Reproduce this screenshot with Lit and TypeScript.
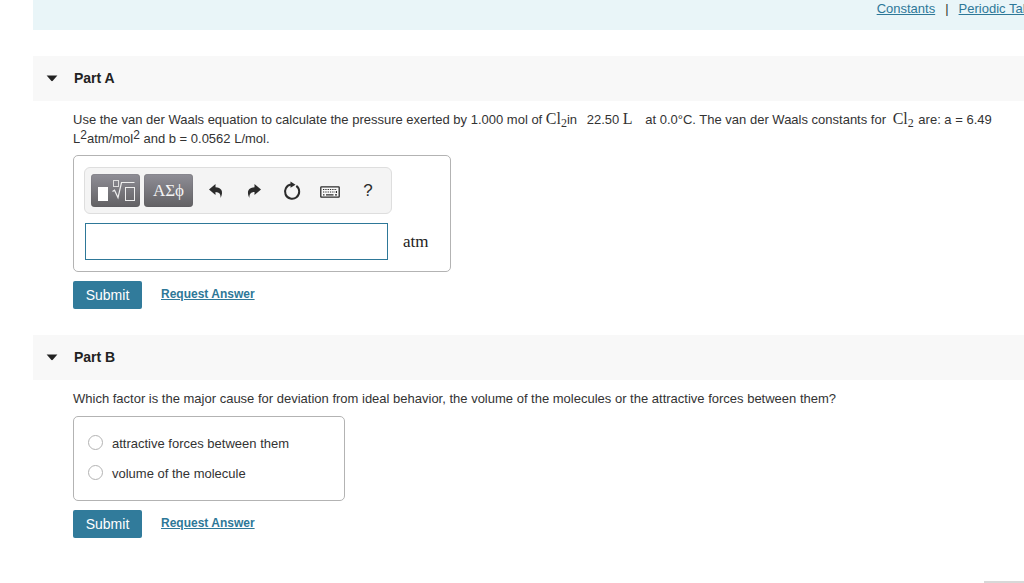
import { LitElement, html, css, svg } from "lit";
import { customElement, property } from "lit/decorators.js";

const icons = {
  undo: svg`<path d="M1 6.5 L7.5 1 V4.2 C13 4.4 16 8 12.6 15 C12.8 11 11.4 9 7.5 8.9 V12 Z" fill="#2b2b2b"/>`,
  redo: svg`<path d="M15 6.5 L8.5 1 V4.2 C3 4.4 0 8 3.4 15 C3.2 11 4.6 9 8.5 8.9 V12 Z" fill="#2b2b2b"/>`,
};

@customElement("part-header")
class PartHeader extends LitElement {
  @property() label = "";
  static styles = css`
    :host { display: block; background: #f8f8f8; }
    .title { margin: 0; font-size: 14px; line-height: 45px; font-weight: bold; }
    .toggle {
      display: flex; align-items: center; gap: 16px; height: 45px; width: 100%;
      padding: 0 0 0 13px; border: 0; background: none; font: inherit; color: #222; text-align: left;
    }
  `;
  render() {
    return html`<h2 class="title">
      <button class="toggle" aria-expanded="true">
        <svg width="12" height="7" viewBox="0 0 12 7"><path d="M.6 .6 H11.4 L6.8 5.8 Q6 6.6 5.2 5.8 Z" fill="#222"/></svg>
        ${this.label}
      </button>
    </h2>`;
  }
}

@customElement("submit-row")
class SubmitRow extends LitElement {
  static styles = css`
    :host { display: flex; align-items: center; gap: 19px; margin-top: 9px; }
    .submit {
      width: 69px; height: 28px; padding: 0; border: 0; border-radius: 2px;
      background: #317b9b; color: #fff; font: 14px/28px "Liberation Sans", sans-serif;
    }
    .request { color: #2e7898; font-size: 12px; font-weight: bold; line-height: 16px; padding-bottom: 2px; }
  `;
  render() {
    return html`<button class="submit">Submit</button><a class="request" href="#">Request Answer</a>`;
  }
}

@customElement("answer-entry")
class AnswerEntry extends LitElement {
  static styles = css`
    :host {
      display: block; box-sizing: border-box; width: fit-content; margin-top: 7px;
      padding: 11px 21px 11px 10px; border: 1px solid #b3b3b3; border-radius: 5px;
    }
    .tools {
      display: flex; align-items: center; box-sizing: border-box; width: 308px; height: 47px;
      padding: 0 3px 0 6px; border: 1px solid #dedede; border-radius: 6px; background: #f4f4f4;
    }
    button { padding: 0; border: 0; background: none; }
    .dark {
      display: flex; align-items: center; justify-content: center; width: 49px; height: 33px; margin-right: 4px;
      flex: none;
      border-radius: 4px; background: linear-gradient(#8f8e96, #626164);
      box-shadow: inset 0 0 1px #4c4c50;
      color: #f4f4f4; font: 17px/31px "Liberation Serif", serif;
    }
    .plain { display: flex; align-items: center; justify-content: center; width: 38px; height: 33px; flex: none; }
    .help { color: #2b2b2b; font: 17px/33px "Liberation Sans", sans-serif; }
    .row { display: flex; align-items: center; gap: 15px; margin: 9px 0 0 1px; }
    .value {
      box-sizing: border-box; width: 303px; height: 37px; padding: 0 8px; border: 1px solid #2e7898;
      border-radius: 0; font: 16px "Liberation Sans", sans-serif; outline: 0;
    }
    .unit { font: 17px/20px "Liberation Serif", serif; color: #222; }
  `;
  render() {
    return html`
      <div class="tools" role="toolbar">
        <button class="dark" aria-label="Templates">
          <svg width="38" height="24" viewBox="0 0 38 24">
            <rect x="1" y="8" width="10" height="14" fill="#fff"/>
            <path d="M15.5 12.5 L17.5 11.2 L21 18.6 L24.5 3.5 H37.5" fill="none" stroke="#eee" stroke-width="1.2"/>
            <rect x="16.5" y="1.5" width="5" height="6" fill="none" stroke="#ddd"/>
            <rect x="28.5" y="8.5" width="9" height="13" fill="none" stroke="#eee"/>
          </svg>
        </button>
        <button class="dark" aria-label="Symbols">ΑΣϕ</button>
        <button class="plain" aria-label="Undo"><svg width="16" height="16" viewBox="0 0 16 16">${icons.undo}</svg></button>
        <button class="plain" aria-label="Redo"><svg width="16" height="16" viewBox="0 0 16 16">${icons.redo}</svg></button>
        <button class="plain" aria-label="Reset">
          <svg width="18" height="20" viewBox="0 0 18 20">
            <path d="M13.3 4.9 A7.1 7.1 0 1 1 8 3.6" fill="none" stroke="#2b2b2b" stroke-width="2"/>
            <path d="M7.5 .6 L12.5 3.7 L7.5 6.8 Z" fill="#2b2b2b"/>
          </svg>
        </button>
        <button class="plain" aria-label="Keyboard">
          <svg width="20" height="16" viewBox="0 0 20 16">
            <rect x=".8" y="3.8" width="18.4" height="10.4" rx=".6" fill="#fafafa" stroke="#2b2b2b" stroke-width="1.3"/>
            <path d="M3 6.5 H17 M3 9 H15" stroke="#2b2b2b" stroke-width="1.2" stroke-dasharray="1.3 1"/>
            <path d="M3 11.8 H4.5 M6 11.8 H13.5 M15 11.8 H17 M16.4 8 V10" stroke="#2b2b2b" stroke-width="1.2"/>
          </svg>
        </button>
        <button class="plain help" aria-label="Help">?</button>
      </div>
      <div class="row">
        <input class="value" id="value" type="text" aria-label="Pressure" />
        <label class="unit" for="value">atm</label>
      </div>
    `;
  }
}

@customElement("app-root")
class AppRoot extends LitElement {
  static styles = css`
    :host {
      display: block; overflow: hidden; padding-left: 33px; background: #fff; color: #333;
      font: 13px/19px "Liberation Sans", Arial, sans-serif;
    }
    .resources {
      display: flex; justify-content: flex-end; gap: 10px; box-sizing: border-box; height: 30px;
      margin-right: -20px; padding-right: 4px; background: #e9f5f8; line-height: 18px;
    }
    .resources a { color: #2e7898; }
    .part { margin-top: 26px; }
    .body { padding: 9px 24px 0 40px; }
    p { margin: 0; }
    .math { font-family: "Liberation Serif", serif; font-size: 16px; line-height: 16px; }
    sub, sup { line-height: 10px; }
    .math sub { font-size: 12px; vertical-align: -3px; }
    sup { font-size: 12px; vertical-align: 4px; }
    .volume { margin: 0 9px 0 6px; }
    .gas { margin: 0 1px 0 3px; }
    .choices {
      display: flex; flex-direction: column; gap: 11px; box-sizing: border-box; width: fit-content;
      margin: 8px 0 0; padding: 17px 55px 17px 14px; border: 1px solid #b3b3b3; border-radius: 5px;
    }
    .choice { display: flex; align-items: flex-start; gap: 9px; }
    .choice input {
      appearance: none; box-sizing: border-box; width: 15px; height: 15px; margin: 1px 0 0;
      border: 1px solid #b3b3b3; border-radius: 50%; background: #fff;
    }
    .next { width: 40px; height: 2px; margin: 43px 0 0 auto; background: #d8d8d8; }
  `;
  render() {
    return html`
      <nav class="resources">
        <a href="#">Constants</a><span>|</span><a href="#">Periodic Table</a>
      </nav>
      <section class="part">
        <part-header label="Part A"></part-header>
        <div class="body">
          <p>Use the van der Waals equation to calculate the pressure exerted by 1.000 mol of <span class="math">Cl<sub>2</sub></span>in
            <span class="volume">22.50 <span class="math">L</span></span> at 0.0°C. The van der Waals constants for
            <span class="math gas">Cl<sub>2</sub></span> are: a = 6.49 L<sup>2</sup>atm/mol<sup>2</sup> and b = 0.0562 L/mol.</p>
          <answer-entry></answer-entry>
          <submit-row></submit-row>
        </div>
      </section>
      <section class="part">
        <part-header label="Part B"></part-header>
        <div class="body">
          <p>Which factor is the major cause for deviation from ideal behavior, the volume of the molecules or the attractive forces between them?</p>
          <div class="choices" role="radiogroup">
            <label class="choice"><input type="radio" name="factor" />attractive forces between them</label>
            <label class="choice"><input type="radio" name="factor" />volume of the molecule</label>
          </div>
          <submit-row></submit-row>
        </div>
      </section>
      <div class="next"></div>
    `;
  }
}
